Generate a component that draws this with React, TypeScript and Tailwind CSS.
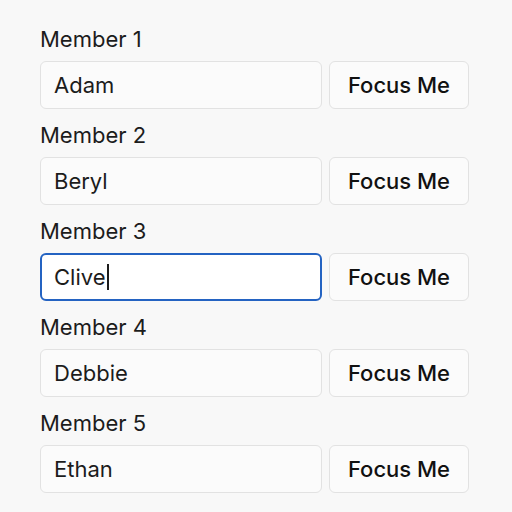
const members = ['Adam', 'Beryl', 'Clive', 'Debbie', 'Ethan'];

function MemberRow({ index, name, focused }: { index: number; name: string; focused: boolean }) {
    return (
        <div className="flex flex-col">
            <label className="h-[26px] leading-[26px] text-[22px] text-[#1c1c1c]">Member {index}</label>
            <div className="mt-[9px] flex gap-[7px]">
                <div
                    className={
                        focused
                            ? 'flex h-[48px] w-[282px] items-center rounded-[6px] border-2 border-[#2463c2] bg-white px-[12px] text-[22px] text-[#1c1c1c]'
                            : 'flex h-[48px] w-[282px] items-center rounded-[6px] border border-[#e2e2e2] bg-[#fbfbfb] px-[13px] text-[22px] text-[#1c1c1c]'
                    }
                >
                    <span>{name}</span>
                    {focused && <span className="ml-px h-[26px] w-[2px] bg-[#1c1c1c]" />}
                </div>
                <button className="h-[48px] w-[140px] rounded-[6px] border border-[#e2e2e2] bg-[#fbfbfb] text-[22px] font-medium text-[#111]">
                    Focus Me
                </button>
            </div>
        </div>
    );
}

export default function App() {
    return (
        <div
            className="min-h-[512px] w-[512px] bg-[#f8f8f8] pl-[40px] pt-[26px]"
            style={{ fontFamily: 'Inter, "Liberation Sans", sans-serif' }}
        >
            <div className="flex flex-col gap-[13px]">
                {members.map((name, i) => (
                    <MemberRow key={name} index={i + 1} name={name} focused={i === 2} />
                ))}
            </div>
        </div>
    );
}
